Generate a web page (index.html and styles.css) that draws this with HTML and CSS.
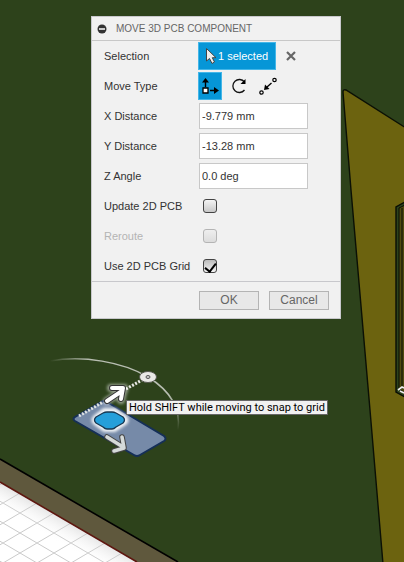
FILE: index.html
```html
<!DOCTYPE html>
<html lang="en">
<head>
    <meta charset="UTF-8">
    <meta name="viewport" content="width=device-width, initial-scale=1.0">
    <title>Move 3D PCB Component</title>
    <link rel="stylesheet" href="styles.css">
</head>
<body>
    <svg class="scene" viewBox="0 0 404 562" preserveAspectRatio="xMinYMin slice" aria-hidden="true">
        <defs>
            <pattern id="grid" x="3" y="523" width="34" height="20" patternUnits="userSpaceOnUse">
                <path d="M0 0L34 20M0 20L34 0" stroke="#cacaca" stroke-width="1"/>
            </pattern>
            <linearGradient id="shade" gradientUnits="userSpaceOnUse" x1="60" y1="516" x2="48" y2="537">
                <stop offset="0" stop-color="#bbb" stop-opacity=".4"/>
                <stop offset="1" stop-color="#fff" stop-opacity="0"/>
            </linearGradient>
            <linearGradient id="arcFade" gradientUnits="userSpaceOnUse" x1="50" y1="0" x2="90" y2="0">
                <stop offset="0" stop-color="#b8beb2" stop-opacity="0"/>
                <stop offset="1" stop-color="#b8beb2"/>
            </linearGradient>
            <linearGradient id="arcFadeDown" gradientUnits="userSpaceOnUse" x1="0" y1="395" x2="0" y2="430">
                <stop offset="0" stop-color="#b8beb2"/>
                <stop offset="1" stop-color="#b8beb2" stop-opacity="0"/>
            </linearGradient>
            <filter id="glow" x="-50%" y="-50%" width="200%" height="200%">
                <feGaussianBlur stdDeviation="1.5"/>
            </filter>
        </defs>

        <!-- board and ground -->
        <rect width="404" height="562" fill="#2d421b"/>
        <path d="M0 482L137 562H0z" fill="#fff"/>
        <path d="M0 482L137 562H0z" fill="url(#grid)"/>
        <path d="M0 482L137 562H0z" fill="url(#shade)"/>
        <path d="M0 459L178 562H137L0 482z" fill="#5f583d"/>
        <path d="M0 459L178 562" stroke="#000" stroke-width="1.6"/>
        <path d="M0 482L137 562" stroke="#5e1710" stroke-width="1.6"/>

        <!-- copper area -->
        <path d="M343 92Q343 89 346 90L406 128V564H383L370 410L351 190z" fill="#6c630f" stroke="#0b1005" stroke-width="1.4"/>
        <path d="M405 202L396 207V392L405 397" fill="#2d421b" stroke="#080d05" stroke-width="1.4"/>
        <path d="M405 205L399 208V389L405 393" fill="#4f4a0e" stroke="#080d05"/>
        <path d="M402 208V389" stroke="#080d05"/>
        <path d="M398 390L402 387L404 388M400 391L404 393" stroke="#eee" stroke-width="1.6" fill="none"/>

        <!-- component -->
        <path d="M75 417L101 402Q104 400 107 402L164 436Q167 439 164 441L140 455Q137 457 134 455L75 421Q72 419 75 417z" fill="#768aa8" stroke="#152f57" stroke-width="2"/>
        <path d="M79 416L103 402" stroke="#dfe3e2" stroke-width="3" stroke-dasharray="2 1.5"/>
        <path d="M126 389L142 380" stroke="#e8e8e4" stroke-width="3" stroke-dasharray="2 1.5"/>

        <!-- rotation arc -->
        <path d="M50 361C83 355 123 362 148 377" fill="none" stroke="url(#arcFade)" stroke-width="1.5"/>
        <path d="M148 377C169 390 181 408 178 430" fill="none" stroke="url(#arcFadeDown)" stroke-width="1.5"/>
        <ellipse cx="148" cy="377" rx="8.5" ry="5.5" fill="#e9e9e6" stroke="#55584f"/>
        <ellipse cx="148" cy="377" rx="2" ry="1.5" fill="#ccc" stroke="#555"/>

        <!-- move handles -->
        <path d="M97 418L105 412H114L123 418Q126 420 123 422L114 428H105L97 422Q94 420 97 418z" fill="#fff" stroke="#fff" stroke-width="8" filter="url(#glow)" opacity=".9"/>
        <path d="M96 417L103 413Q105 412 107 412H112Q114 412 116 413L123 417Q126 420 123 423L116 427Q114 429 112 429H107Q105 429 103 427L96 423Q93 420 96 417z" fill="#259fda" stroke="#173852" stroke-width="1.3"/>
        <g fill="none" stroke-linecap="round" stroke-linejoin="round">
            <path d="M107 401L124 390M111 388L124 388L121 400" stroke="#fff" stroke-width="8" filter="url(#glow)" opacity=".5"/>
            <path d="M107 401L122 391M112 388L123 388L121 399" stroke="#333" stroke-width="6"/>
            <path d="M107 401L122 391M112 388L123 388L121 399" stroke="#fff" stroke-width="4"/>
            <path d="M107 437L123 447M122 437L124 448L114 451" stroke="#444" stroke-width="5.6"/>
            <path d="M107 437L123 447M122 437L124 448L114 451" stroke="#d5dad9" stroke-width="3.6"/>
        </g>
    </svg>

    <form class="dialog">
        <header class="dialog-header">
            <button type="button" class="collapse" aria-label="Collapse">
                <svg width="10" height="10" viewBox="0 0 10 10"><circle cx="5" cy="5" r="4.5" fill="#333"/><path d="M2 5H8" stroke="#fff" stroke-width="1.5"/></svg>
            </button>
            <h1>MOVE 3D PCB COMPONENT</h1>
        </header>

        <div class="dialog-body">
            <div class="row">
                <span>Selection</span>
                <div class="controls">
                    <button type="button" class="selected">
                        <svg width="12" height="18" viewBox="0 0 12 18"><path d="M1.5 1.5V14L4.5 11.5L7 16.5L9.5 15L7.3 10.7H11z" fill="#eee" stroke="#444"/></svg>
                        1 selected
                    </button>
                    <button type="button" class="clear" aria-label="Clear selection">
                        <svg width="10" height="10" viewBox="0 0 10 10"><path d="M1 1L9 9M9 1L1 9" stroke="#666" stroke-width="2.2"/></svg>
                    </button>
                </div>
            </div>
            <div class="row">
                <span>Move Type</span>
                <div class="controls move-types">
                    <button type="button" class="move-type active" aria-label="Free move">
                        <svg width="18" height="18" viewBox="0 0 18 18"><path d="M2 11h5v5H2z" fill="#fff" stroke="#000" stroke-width="1.3"/><path d="M4.5 10V4M9 13.5H14" stroke="#000" stroke-width="1.4"/><path d="M1 5.5L4.5 1L8 5.5zM13 10L18 13.5L13 17z"/></svg>
                    </button>
                    <button type="button" class="move-type" aria-label="Rotate">
                        <svg width="18" height="18" viewBox="0 0 18 18"><path d="M14.5 5A6.5 6.5 0 1 0 14.5 13" fill="none" stroke="#111" stroke-width="1.3"/><path d="M15.5 2V7H10.5z"/></svg>
                    </button>
                    <button type="button" class="move-type" aria-label="Point to point">
                        <svg width="18" height="18" viewBox="0 0 18 18"><circle cx="2.5" cy="15.5" r="1.7" fill="#fff" stroke="#000" stroke-width="1.2"/><circle cx="15.5" cy="3" r="1.7" fill="#fff" stroke="#000" stroke-width="1.2"/><path d="M12.5 6L8 10" stroke="#000" stroke-width="1.4"/><path d="M5 13L6 7.5L10.5 12z"/></svg>
                    </button>
                </div>
            </div>
            <div class="row">
                <label for="xDistance">X Distance</label>
                <input type="text" id="xDistance" class="value" value="-9.779 mm">
            </div>
            <div class="row">
                <label for="yDistance">Y Distance</label>
                <input type="text" id="yDistance" class="value" value="-13.28 mm">
            </div>
            <div class="row">
                <label for="zAngle">Z Angle</label>
                <input type="text" id="zAngle" class="value" value="0.0 deg">
            </div>
            <div class="row">
                <label for="update2d">Update 2D PCB</label>
                <input type="checkbox" id="update2d" class="check">
            </div>
            <div class="row disabled">
                <label for="reroute">Reroute</label>
                <input type="checkbox" id="reroute" class="check" disabled>
            </div>
            <div class="row">
                <label for="useGrid">Use 2D PCB Grid</label>
                <input type="checkbox" id="useGrid" class="check" checked>
            </div>
        </div>

        <footer class="dialog-footer">
            <button type="button">OK</button>
            <button type="button">Cancel</button>
        </footer>
    </form>

    <div class="tooltip" role="tooltip">Hold SHIFT while moving to snap to grid</div>
</body>
</html>
```
FILE: styles.css
```css
* {
    box-sizing: border-box;
}
body {
    margin: 0;
    min-height: 100vh;
    position: relative;
    overflow: hidden;
    background-color: #2d421b;
    font-family: "Liberation Sans", Arial, sans-serif;
    font-size: 11px;
    color: #333;
}
button,
input {
    font: inherit;
    color: inherit;
    margin: 0;
}
button {
    border: none;
    background: none;
    padding: 0;
    cursor: pointer;
}
svg {
    display: block;
}
.scene {
    position: absolute;
    top: 0;
    left: 0;
    width: 100%;
    height: 100%;
}
.dialog {
    position: absolute;
    left: 91px;
    top: 16px;
    width: 250px;
    background-color: #f1f1f1;
    border: 1px solid #c8c8cc;
}
.dialog-header {
    display: flex;
    align-items: center;
    gap: 9px;
    height: 24px;
    padding: 0 5px;
    border-bottom: 1px solid #c8c8c8;
}
.dialog-header h1 {
    margin: 0;
    font-size: 10px;
    font-weight: normal;
    color: #666;
}
.row {
    display: grid;
    grid-template-columns: 94px 1fr;
    align-items: center;
    height: 30px;
    padding-left: 12px;
}
.disabled {
    color: #b4b4b4;
}
.controls {
    display: flex;
    align-items: center;
    gap: 10px;
}
.move-types {
    gap: 5px;
}
.selected {
    display: flex;
    align-items: center;
    gap: 1px;
    height: 28px;
    padding: 0 7px 0 6px;
    background-color: #0696d7;
    border: 1px solid #43b6e8;
    color: #fff;
}
.move-type {
    display: grid;
    place-items: center;
    width: 24px;
    height: 28px;
}
.active {
    background-color: #0696d7;
    border: 1px solid #43b6e8;
}
.value {
    width: 109px;
    height: 26px;
    margin-left: 1px;
    padding: 0 2px;
    background-color: #fff;
    border: 1px solid #c8c8c8;
}
.check {
    appearance: none;
    width: 14px;
    height: 14px;
    margin-left: 5px;
    border: 1px solid #444;
    border-radius: 3px;
    background: linear-gradient(#f4f4f4, #c8c8c8);
}
.check:disabled {
    border-color: #b4b4b4;
    background: linear-gradient(#eee, #dcdcdc);
}
.check:checked {
    display: flex;
    justify-content: center;
    padding-top: 1px;
    background: linear-gradient(#bbb, #f4f4f4);
}
.check:checked::before {
    content: "";
    width: 5px;
    height: 9px;
    border: solid #000;
    border-width: 0 2px 2px 0;
    transform: rotate(38deg);
}
.dialog-footer {
    display: flex;
    justify-content: flex-end;
    align-items: center;
    gap: 10px;
    height: 37px;
    padding: 0 11px;
    border-top: 1px solid #c8c8cc;
}
.dialog-footer button {
    width: 60px;
    height: 19px;
    font-size: 12px;
    color: #666;
    background-color: #e8e8e8;
    border: 1px solid #b4b4b4;
}
.tooltip {
    position: absolute;
    left: 126px;
    top: 400px;
    padding: 0 2px;
    border: 1px solid #666;
    background-color: #f1f1f1;
    color: #000;
    font-family: Tahoma, Roboto, sans-serif;
    font-size: 11px;
    line-height: 13px;
    white-space: nowrap;
}
```
